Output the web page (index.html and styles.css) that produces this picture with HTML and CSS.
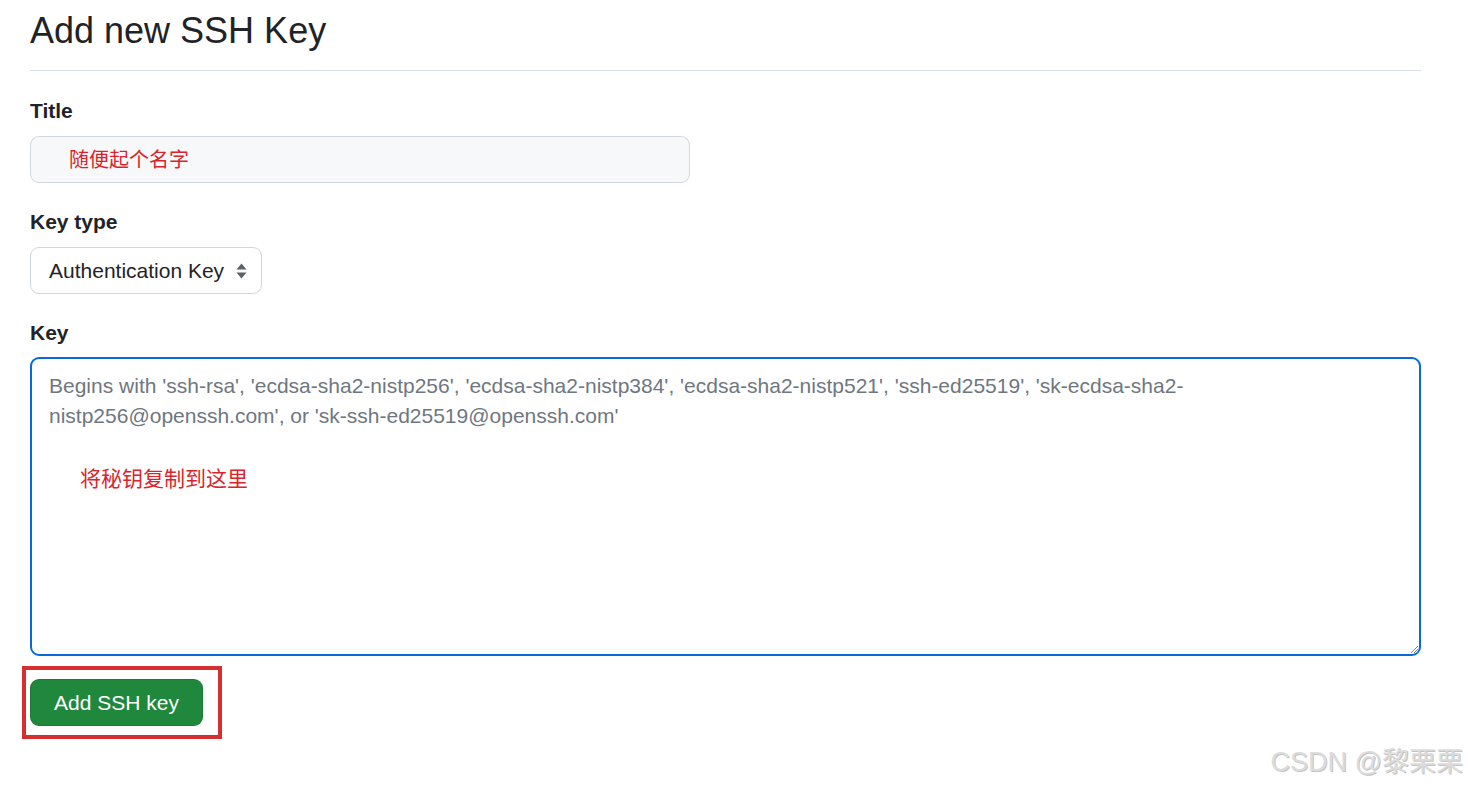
FILE: index.html
```html
<!DOCTYPE html>
<html lang="en">
<head>
  <meta charset="UTF-8" />
  <title>Add new SSH Key</title>
  <link rel="stylesheet" href="styles.css">
</head>
<body>
  <div class="page">
    <h2 class="subhead">Add new SSH Key</h2>

    <div class="form-group">
      <label class="form-label">Title</label>
      <div class="form-control title-input"><span class="note">随便起个名字</span></div>
    </div>

    <div class="form-group">
      <label class="form-label">Key type</label>
      <div class="form-select">
        <span>Authentication Key</span>
        <svg class="select-arrow" width="11" height="16" viewBox="0 0 11 16">
          <path d="M5.5 0.5 L10.5 6.5 L0.5 6.5 Z" fill="#59636e"/>
          <path d="M5.5 15.5 L10.5 9.5 L0.5 9.5 Z" fill="#59636e"/>
        </svg>
      </div>
    </div>

    <div class="form-group">
      <label class="form-label">Key</label>
      <div class="key-box">
        <p class="placeholder">Begins with 'ssh-rsa', 'ecdsa-sha2-nistp256', 'ecdsa-sha2-nistp384', 'ecdsa-sha2-nistp521', 'ssh-ed25519', 'sk-ecdsa-sha2-nistp256@openssh.com', or 'sk-ssh-ed25519@openssh.com'</p>
        <p class="note key-note">将秘钥复制到这里</p>
        <svg class="resize-grip" width="10" height="10" viewBox="0 0 10 10">
          <path d="M9 2 L2 9 M9 5 L5 9 M9 8 L8 9" stroke="#7d8590" stroke-width="1"/>
        </svg>
      </div>
    </div>

    <div class="mark-box">
      <button class="btn-primary">Add SSH key</button>
    </div>
  </div>

  <div class="watermark">CSDN @黎栗栗</div>
</body>
</html>
```

FILE: styles.css
```css
body {
  margin: 0;
  font-family: "Liberation Sans", Arial, "Noto Sans CJK SC", sans-serif;
  color: #1f2328;
  background: #fff;
}

.page {
  width: 1391px;
  padding-left: 30px;
}

.subhead {
  margin: 4px 0 25px;
  padding-bottom: 12px;
  border-bottom: 1px solid #d8dee4;
  font-size: 36px;
  font-weight: normal;
  line-height: 54px;
}

.form-group {
  margin-bottom: 24px;
}

.form-label {
  display: block;
  margin-bottom: 10px;
  font-size: 21px;
  font-weight: bold;
  line-height: 30px;
}

.form-control,
.form-select {
  box-sizing: border-box;
  height: 47px;
  border: 1px solid #d0d7de;
  border-radius: 9px;
  font-size: 21px;
  line-height: 30px;
}

.title-input {
  width: 660px;
  padding: 7px 18px 7px 38px;
  background: #f6f8fa;
}

.note {
  color: #d9242b;
  font-family: "Noto Sans CJK SC", sans-serif;
  font-size: 20px;
}

.form-select {
  display: flex;
  align-items: center;
  width: 232px;
  padding: 0 14px 0 18px;
  background: #fff;
}

.form-select span {
  flex: 1;
}

.select-arrow {
  margin-top: 1px;
}

.key-box {
  position: relative;
  box-sizing: border-box;
  height: 299px;
  margin-top: -1px;
  padding: 12px 17px;
  border: 2px solid #0969da;
  border-radius: 9px;
  font-size: 21px;
  line-height: 30px;
}

.key-box p {
  margin: 0;
}

.placeholder {
  color: #6e7781;
}

.key-note {
  margin-top: 31px !important;
  padding-left: 31px;
  font-size: 21px;
}

.resize-grip {
  position: absolute;
  right: 0;
  bottom: 0;
}

.mark-box {
  display: inline-block;
  margin: -14px 0 0 -8px;
  padding: 9px 15px 9px 4px;
  border: 4px solid #d62f2f;
}

.btn-primary {
  height: 47px;
  padding: 0 23px;
  border: 1px solid rgba(31, 35, 40, 0.15);
  border-radius: 9px;
  background: #1f883d;
  color: #fff;
  font-family: "Liberation Sans", Arial, sans-serif;
  font-size: 21px;
  line-height: 30px;
}

.watermark {
  position: absolute;
  right: 5px;
  top: 740px;
  color: #dcdcdc;
  font-family: "Liberation Sans", "Noto Sans CJK SC", sans-serif;
  font-size: 27px;
  text-shadow: 1px 1px 0 #c4c4c4;
}
```
